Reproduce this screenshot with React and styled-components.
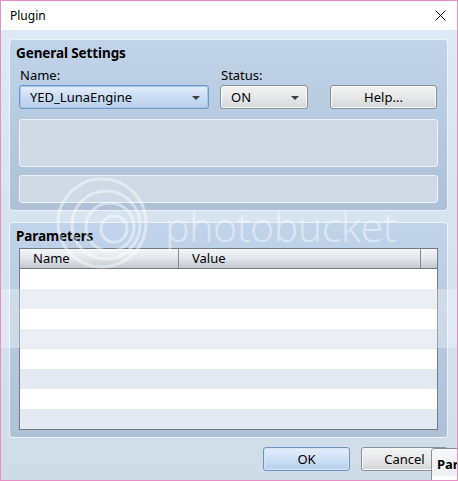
import React from "react";
import styled, { createGlobalStyle } from "styled-components";

const Global = createGlobalStyle`
  html, body { margin: 0; padding: 0; background: #fff; }
  body { font-family: "Noto Sans", "Open Sans", sans-serif; color: #000; }
  * { box-sizing: border-box; }
`;

const Window = styled.div`
  position: relative;
  width: 458px;
  height: 481px;
  border: 1px solid #e88fc4;
  display: flex;
  flex-direction: column;
  overflow: hidden;
  background: linear-gradient(#dfeaf7, #cfdbe7);
`;

const TitleBar = styled.div`
  height: 29px;
  flex: none;
  background: #fff;
  display: flex;
  align-items: center;
  justify-content: space-between;
  padding: 0 11px 0 9px;
  font-size: 12px;
`;

const Body = styled.div`
  flex: none;
  display: flex;
  flex-direction: column;
  gap: 11px;
  padding: 9px 9px 0 8px;
`;

const Group = styled.div`
  border: 1px solid rgba(246, 250, 255, 0.85);
  border-radius: 4px;
  background: linear-gradient(#c1d3e9, #aec1d7);
  padding: 4px 9px 7px 9px;
  display: flex;
  flex-direction: column;
`;

const GroupTitle = styled.div`
  font-weight: bold;
  font-size: 13.5px;
  line-height: 18px;
  margin-left: -3px;
  letter-spacing: -0.1px;
`;

const FieldRow = styled.div`
  display: flex;
  align-items: flex-end;
  margin-top: 5px;
`;

const Field = styled.div`
  display: flex;
  flex-direction: column;
  width: ${(p) => p.$w}px;
  margin-right: ${(p) => p.$mr || 0}px;
`;

const Label = styled.div`
  font-size: 13px;
  line-height: 16px;
  margin-bottom: 2px;
  padding-left: 1px;
`;

const Select = styled.div`
  height: 24px;
  border-radius: 3px;
  border: 1px solid ${(p) => (p.$focus ? "#6c97c8" : "#8c9196")};
  box-shadow: inset 0 0 0 1px ${(p) => (p.$focus ? "#a9c6e6" : "#f7f8f9")};
  background: ${(p) =>
    p.$focus
      ? "linear-gradient(#e6effa, #c9dcf2 50%, #b9d0ec)"
      : "linear-gradient(#f3f3f3, #e7e8e9 50%, #d5d7da)"};
  display: flex;
  align-items: center;
  justify-content: space-between;
  padding: 0 8px 0 10px;
  font-size: 13px;
`;

const Arrow = styled.span`
  width: 0;
  height: 0;
  border-left: 4px solid transparent;
  border-right: 4px solid transparent;
  border-top: 4px solid #3d3d3d;
  margin-top: 1px;
`;

const Button = styled.div`
  width: ${(p) => p.$w || 87}px;
  height: 24px;
  border-radius: 3px;
  border: 1px solid ${(p) => (p.$primary ? "#6f93bf" : "#8c9196")};
  box-shadow: inset 0 0 0 1px ${(p) => (p.$primary ? "#d5e5f6" : "#f7f8f9")};
  background: ${(p) =>
    p.$primary
      ? "linear-gradient(#e3eefb, #cfe0f4 50%, #b6cfeb)"
      : "linear-gradient(#f3f3f3, #e7e8e9 50%, #d3d5d8)"};
  display: flex;
  align-items: center;
  justify-content: center;
  font-size: 13px;
  margin-left: ${(p) => (p.$push ? "auto" : "0")};
  margin-right: ${(p) => p.$mr || 0}px;
`;

const Inset = styled.div`
  height: ${(p) => p.$h}px;
  margin-top: ${(p) => p.$mt}px;
  border: 1px solid #eef3f9;
  border-radius: 3px;
  background: #ced9e5;
`;

const Table = styled.div`
  margin-top: 3px;
  border: 1px solid #747a81;
  background: #fff;
  display: flex;
  flex-direction: column;
`;

const HeaderRow = styled.div`
  display: grid;
  grid-template-columns: 159px 242px 1fr;
  height: 20px;
  border-bottom: 1px solid #747a81;
  background: linear-gradient(#f4f6f8, #e2e5e9 50%, #c3c8cd);
`;

const HeaderCell = styled.div`
  font-size: 13px;
  line-height: 19px;
  padding-left: ${(p) => p.$pl}px;
  border-right: ${(p) => (p.$last ? "none" : "1px solid #838890")};
`;

const DataRow = styled.div`
  height: 20px;
  background: ${(p) => (p.$alt ? "#e2e9f1" : "#ffffff")};
`;

const Footer = styled.div`
  display: flex;
  justify-content: flex-end;
  gap: 11px;
  padding: 9px 9px 0 0;
`;

const Tip = styled.div`
  position: absolute;
  left: 430px;
  top: 447px;
  width: 80px;
  height: 40px;
  border: 1px solid #8a8f95;
  border-radius: 3px;
  background: linear-gradient(#f7f8fa, #eef1f4 70%, #fff 70%);
  font-weight: bold;
  font-size: 13px;
  padding: 6px 0 0 5px;
`;

const Watermark = styled.div`
  position: absolute;
  left: 54px;
  top: 175px;
  display: flex;
  align-items: center;
  gap: 14px;
  pointer-events: none;
`;

const WmText = styled.div`
  font-family: "Noto Sans", sans-serif;
  font-weight: 300;
  font-size: 41px;
  letter-spacing: -0.5px;
  color: rgba(255, 255, 255, 0.45);
  margin-top: 4px;
`;

const Band = styled.div`
  position: absolute;
  left: 0;
  right: 0;
  top: 288px;
  height: 59px;
  background: rgba(255, 255, 255, 0.3);
  pointer-events: none;
`;

function CloseIcon() {
  return (
    <svg width="11" height="11" viewBox="0 0 11 11">
      <path d="M0.5 0.5 L10.5 10.5 M10.5 0.5 L0.5 10.5" stroke="#000" strokeWidth="1" />
    </svg>
  );
}

function Logo() {
  return (
    <svg width="96" height="96" viewBox="0 0 96 96">
      <g fill="none" stroke="rgba(255,255,255,0.45)" strokeWidth="3">
        <circle cx="47" cy="47" r="44" />
        <circle cx="51" cy="49" r="34" />
        <circle cx="55" cy="51" r="24" />
        <circle cx="59" cy="53" r="13" />
      </g>
    </svg>
  );
}

export default function App() {
  const rows = Array.from({ length: 8 }, (_, i) => i % 2 === 1);
  return (
    <>
      <Global />
      <Window>
        <TitleBar>
          <span>Plugin</span>
          <CloseIcon />
        </TitleBar>
        <Body>
          <Group>
            <GroupTitle>General Settings</GroupTitle>
            <FieldRow>
              <Field $w={190} $mr={11}>
                <Label>Name:</Label>
                <Select $focus>
                  <span>YED_LunaEngine</span>
                  <Arrow />
                </Select>
              </Field>
              <Field $w={88}>
                <Label>Status:</Label>
                <Select>
                  <span>ON</span>
                  <Arrow />
                </Select>
              </Field>
              <Button $w={107} $push $mr={1}>
                Help...
              </Button>
            </FieldRow>
            <Inset $h={48} $mt={10} />
            <Inset $h={28} $mt={8} />
          </Group>
          <Group>
            <GroupTitle>Parameters</GroupTitle>
            <Table>
              <HeaderRow>
                <HeaderCell $pl={13}>Name</HeaderCell>
                <HeaderCell $pl={13}>Value</HeaderCell>
                <HeaderCell $last />
              </HeaderRow>
              {rows.map((alt, i) => (
                <DataRow key={i} $alt={alt} />
              ))}
            </Table>
          </Group>
        </Body>
        <Footer>
          <Button $primary>OK</Button>
          <Button>Cancel</Button>
        </Footer>
        <Tip>Par</Tip>
        <Band />
        <Watermark>
          <Logo />
          <WmText>photobucket</WmText>
        </Watermark>
      </Window>
    </>
  );
}
